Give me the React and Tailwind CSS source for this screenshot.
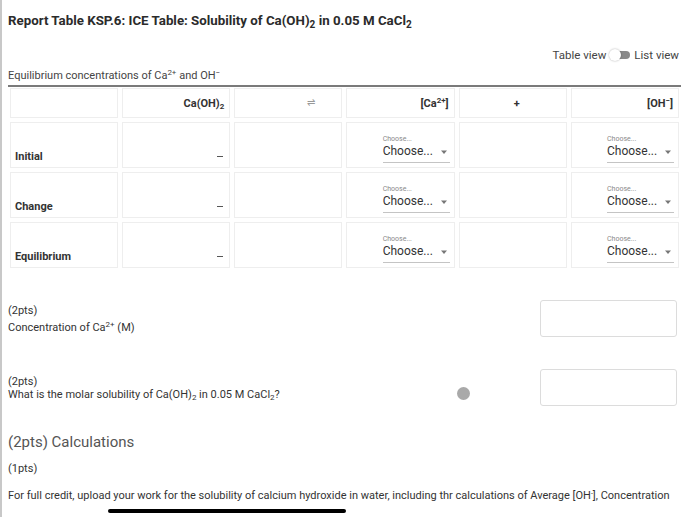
import React from 'react';

const rows = ['Initial', 'Change', 'Equilibrium'];

const Select = () => (
  <div className="w-[67px] border-b border-[#c4c4c4] pb-[3px]">
    <div className="text-[7px] leading-[9px] text-[#8a8a8a]">Choose...</div>
    <div className="flex items-center justify-between text-[12px] leading-[15px] text-[#333]">
      <span>Choose...</span>
      <svg width="8" height="5" viewBox="0 0 8 5" className="mr-[2px] mt-[2px]">
        <path d="M1 0.5 L7 0.5 L4 4 Z" fill="#777" />
      </svg>
    </div>
  </div>
);

const Cell = ({ children, className = '' }) => (
  <div className={`border border-[#eeeeee] flex leading-none ${className}`}>{children}</div>
);

export default function App() {
  return (
    <div
      className="h-[517px] w-[700px] border-l-2 border-[#c8c8c8] bg-white text-[#333] overflow-hidden"
      style={{ fontFamily: 'Roboto, "Liberation Sans", sans-serif' }}
    >
      <div className="px-[6px] pt-[11px]">
        {/* Header */}
        <h1 className="text-[13.3px] font-bold leading-[20px] text-[#2b2b2b]">
          Report Table KSP.6: ICE Table: Solubility of Ca(OH)<sub className="text-[10px]">2</sub> in 0.05 M CaCl<sub className="text-[10px]">2</sub>
        </h1>

        <div className="mt-[16px] flex items-center justify-end pr-[15px] text-[11.5px] leading-[16px] text-[#444]">
          <span>Table view</span>
          <div className="relative mx-[3px] h-[12px] w-[22px]">
            <div className="absolute left-[4px] top-[2px] h-[8px] w-[17px] rounded-full bg-[#8a8a8a]" />
            <div className="absolute left-0 top-0 h-[12px] w-[12px] rounded-full bg-white shadow-[0_0_2px_rgba(0,0,0,0.35)]" />
          </div>
          <span>List view</span>
        </div>

        <div className="mt-[6px] mr-[13px] border-b-2 border-[#7a7a7a] pb-[2px] text-[11px] leading-[14px] text-[#444]">
          Equilibrium concentrations of Ca<sup className="text-[8px]">2+</sup> and OH<sup className="text-[8px]">−</sup>
        </div>

        {/* ICE table */}
        <div className="mr-[13px] grid grid-cols-6 gap-[4px] px-[2px] pt-[1px]">
          <Cell className="h-[30px]" />
          <Cell className="h-[30px] items-center justify-end pr-[5px] text-[11px] font-bold">
            <span>
              Ca(OH)<sub className="text-[8px]">2</sub>
            </span>
          </Cell>
          <Cell className="h-[30px] items-center justify-center pl-[46px] text-[10px] text-[#999]">⇌</Cell>
          <Cell className="h-[30px] items-center justify-end pr-[5px] text-[11px] font-bold">
            <span>
              [Ca<sup className="text-[8px]">2+</sup>]
            </span>
          </Cell>
          <Cell className="h-[30px] items-center justify-center pl-[8px] text-[11px] font-bold">+</Cell>
          <Cell className="h-[30px] items-center justify-end pr-[5px] text-[11px] font-bold">
            <span>
              [OH<sup className="text-[8px]">−</sup>]
            </span>
          </Cell>

          {rows.map((r) => (
            <React.Fragment key={r}>
              <Cell className="h-[46px] items-end pb-[5px] pl-[4px] text-[11px] font-bold">{r}</Cell>
              <Cell className="h-[46px] items-end justify-end pb-[10px] pr-[6px]">
                <div className="h-[1.5px] w-[6px] bg-[#555]" />
              </Cell>
              <Cell className="h-[46px]" />
              <Cell className="h-[46px] items-end justify-end pb-[4px] pr-[4px]">
                <Select />
              </Cell>
              <Cell className="h-[46px]" />
              <Cell className="h-[46px] items-end justify-end pb-[4px] pr-[4px]">
                <Select />
              </Cell>
            </React.Fragment>
          ))}
        </div>

        {/* Questions */}
        <div className="mt-[32px] mr-[17px] flex items-center justify-between">
          <div className="text-[11px] leading-[17px] text-[#333]">
            <div>(2pts)</div>
            <div>
              Concentration of Ca<sup className="text-[8px]">2+</sup> (M)
            </div>
          </div>
          <div className="h-[37px] w-[137px] rounded-[3px] border border-[#dcdcdc]" />
        </div>

        <div className="mt-[32px] mr-[17px] flex items-center justify-between">
          <div className="text-[11px] leading-[13px] text-[#333]">
            <div>(2pts)</div>
            <div>
              What is the molar solubility of Ca(OH)<sub className="text-[8px]">2</sub> in 0.05 M CaCl<sub className="text-[8px]">2</sub>?
            </div>
          </div>
          <div className="flex items-center">
            <div className="mr-[70px] mt-[11px] h-[13px] w-[13px] rounded-full bg-[#a9a9a9]" />
            <div className="h-[37px] w-[137px] rounded-[3px] border border-[#dcdcdc]" />
          </div>
        </div>

        <div className="mt-[26px] text-[15px] leading-[20px] text-[#555]">(2pts) Calculations</div>
        <div className="mt-[10px] text-[11px] leading-[14px] text-[#333]">(1pts)</div>
        <div className="mt-[13px] whitespace-nowrap text-[11px] leading-[14px] text-[#333]">
          For full credit, upload your work for the solubility of calcium hydroxide in water, including thr calculations of Average [OH<sup className="text-[7px]">-</sup>], Concentration
        </div>
        <div className="ml-[100px] mt-[6px] h-[4px] w-[238px] rounded-full bg-black" />
      </div>
    </div>
  );
}
